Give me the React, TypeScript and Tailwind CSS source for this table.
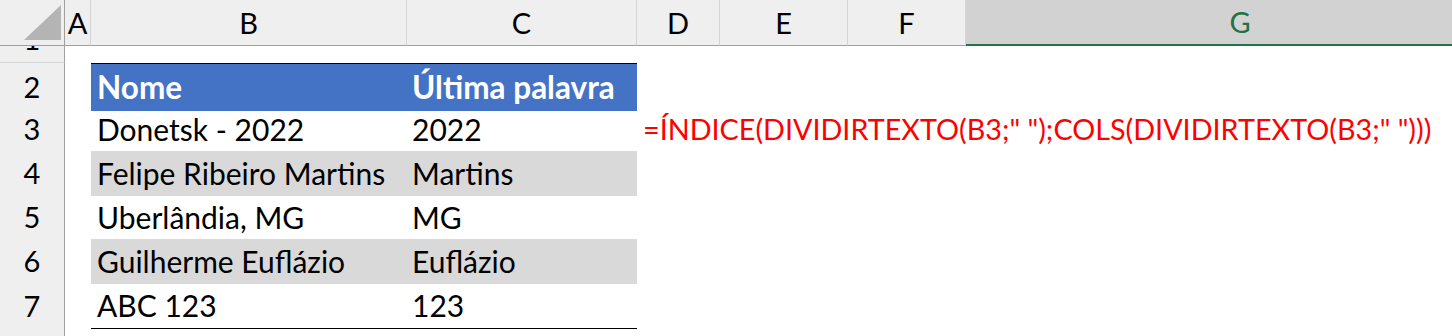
const COLS = 'grid grid-cols-[65px_26px_316px_230px_83px_128px_118px_548px]';

const FONT = { fontFamily: 'Lato, "Liberation Sans", sans-serif' };

type Row = {
  n: number;
  b: string;
  c: string;
  striped?: boolean;
  formula?: string;
};

const rows: Row[] = [
  {
    n: 3,
    b: 'Donetsk - 2022',
    c: '2022',
    formula: '=ÍNDICE(DIVIDIRTEXTO(B3;" ");COLS(DIVIDIRTEXTO(B3;" ")))',
  },
  { n: 4, b: 'Felipe Ribeiro Martins', c: 'Martins', striped: true },
  { n: 5, b: 'Uberlândia, MG', c: 'MG' },
  { n: 6, b: 'Guilherme Euflázio', c: 'Euflázio', striped: true },
  { n: 7, b: 'ABC 123', c: '123' },
];

function ColumnHeader({ label, last }: { label: string; last?: boolean }) {
  return (
    <div
      className={
        last
          ? 'flex items-center justify-center bg-[#d2d2d2] border-b-2 border-[#217346] text-[#217346]'
          : 'flex items-center justify-center bg-[#efefef] border-r border-b border-r-[#d4d4d4] border-b-[#a0a0a0] text-black'
      }
    >
      <span className="text-[29px]">{label}</span>
    </div>
  );
}

function RowHeader({ n, className = '' }: { n?: number; className?: string }) {
  return (
    <div
      className={`flex items-center justify-center bg-[#efefef] border-r border-b border-r-[#a0a0a0] border-b-[#d4d4d4] text-[29px] text-black ${className}`}
    >
      {n}
    </div>
  );
}

export default function App() {
  return (
    <div className="h-[336px] w-[1452px] overflow-hidden bg-white" style={FONT}>
      {/* column letters */}
      <div className={`${COLS} h-[45px]`}>
        <div className="relative bg-[#efefef] border-r border-b border-r-[#a0a0a0] border-b-[#a0a0a0]">
          <svg className="absolute left-0 top-0" width="64" height="44" viewBox="0 0 64 44">
            <polygon points="24,40 61,40 61,5" fill="#b4b4b4" />
          </svg>
        </div>
        <ColumnHeader label="A" />
        <ColumnHeader label="B" />
        <ColumnHeader label="C" />
        <ColumnHeader label="D" />
        <ColumnHeader label="E" />
        <ColumnHeader label="F" />
        <ColumnHeader label="G" last />
      </div>

      {/* row 1, scrolled so only its lower part shows */}
      <div className={`${COLS} h-[18px] overflow-hidden`}>
        <div className="h-[18px] overflow-hidden bg-[#efefef] border-r border-b border-r-[#a0a0a0] border-b-[#d4d4d4]">
          <div className="-mt-[28px] flex h-[44px] items-center justify-center text-[29px] text-black">1</div>
        </div>
      </div>

      {/* row 2: table header */}
      <div className={`${COLS} h-[44px]`}>
        <RowHeader n={2} />
        <div />
        <div className="col-span-2 flex flex-col">
          <div className="h-px bg-black" />
          <div className="grid flex-1 grid-cols-[316px_230px] bg-[#4472c4] text-[31.5px] font-bold text-white">
            <div className="flex items-center pl-[6px]">Nome</div>
            <div className="flex items-center pl-[5px]">Última palavra</div>
          </div>
        </div>
      </div>

      {rows.map((r) => (
        <div key={r.n} className={`${COLS} h-[44px]`}>
          <RowHeader n={r.n} />
          <div />
          <div
            className={`flex items-center pl-[6px] text-[30px] text-black ${r.striped ? 'bg-[#d9d9d9]' : ''} ${
              r.n === 7 ? 'border-b border-black' : ''
            }`}
          >
            {r.b}
          </div>
          <div
            className={`flex items-center pl-[5px] text-[30px] text-black ${r.striped ? 'bg-[#d9d9d9]' : ''} ${
              r.n === 7 ? 'border-b border-black' : ''
            }`}
          >
            {r.c}
          </div>
          <div className="flex items-center pl-[6px] text-[28.75px] whitespace-nowrap text-[#ff0000]">
            {r.formula}
          </div>
        </div>
      ))}

      {/* row 8, cut off at the bottom */}
      <div className={`${COLS} h-[44px]`}>
        <RowHeader />
      </div>
    </div>
  );
}
